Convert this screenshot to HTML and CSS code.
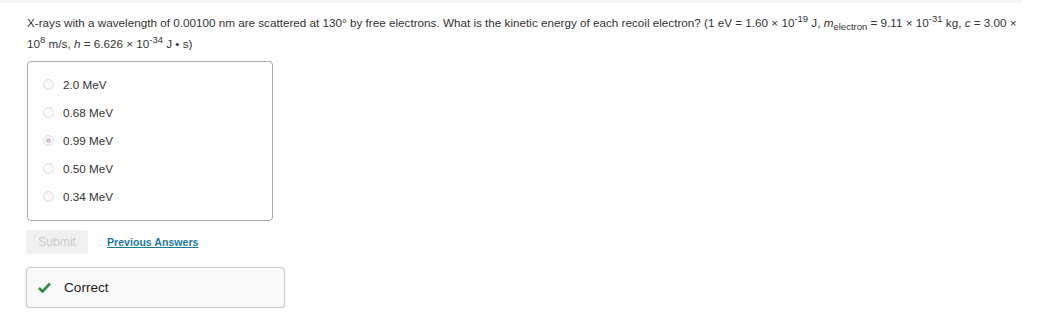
FILE: index.html
```html
<!DOCTYPE html>
<html>
<head>
<meta charset="utf-8">
<link rel="stylesheet" href="styles.css">
</head>
<body>
<div class="topbar"></div>
<div class="content">
  <p class="question">X-rays with a wavelength of 0.00100 nm are scattered at 130° by free electrons. What is the kinetic energy of each recoil electron? (1 eV = 1.60 × 10<sup>-19</sup> J, <i>m</i><sub>electron</sub> = 9.11 × 10<sup>-31</sup> kg, <i>c</i> = 3.00 × 10<sup>8</sup> m/s, <i>h</i> = 6.626 × 10<sup>-34</sup> J • s)</p>
  <div class="options">
    <label class="option"><span class="radio"></span><span>2.0 MeV</span></label>
    <label class="option"><span class="radio"></span><span>0.68 MeV</span></label>
    <label class="option"><span class="radio checked"></span><span>0.99 MeV</span></label>
    <label class="option"><span class="radio"></span><span>0.50 MeV</span></label>
    <label class="option"><span class="radio"></span><span>0.34 MeV</span></label>
  </div>
  <div class="actions">
    <button class="submit" disabled>Submit</button>
    <a class="prev" href="#">Previous Answers</a>
  </div>
  <div class="feedback">
    <svg class="check" width="13" height="11" viewBox="0 0 13 11"><path d="M1 6 L4.5 9.5 L12 1.5" fill="none" stroke="#2e8b3e" stroke-width="2.6"/></svg>
    <span>Correct</span>
  </div>
</div>
</body>
</html>
```
FILE: styles.css
```css
html, body { margin: 0; padding: 0; background: #fff; }
body { font-family: "Liberation Sans", Arial, sans-serif; color: #333; }
.topbar { height: 3px; width: 1022px; background: #f5f5f5; }
.content { padding: 9px 0 0 27px; }
.question { margin: 0; font-size: 11.7px; line-height: 21px; width: 1000px; color: #333; }
.question sup, .question sub { font-size: 9.5px; line-height: 1; }
.options {
  margin-top: 7px; width: 246px; box-sizing: border-box; border: 1px solid #aaa; border-radius: 4px;
  padding: 8px 0 10px 15px; display: flex; flex-direction: column;
}
.option { display: flex; align-items: center; gap: 9px; height: 28px; font-size: 11.7px; color: #333; }
.radio { width: 9px; height: 9px; border: 1px solid #ddd; border-radius: 50%; background: #fafafa; display: flex; align-items: center; justify-content: center; }
.radio.checked::after { content: ""; width: 5px; height: 5px; border-radius: 50%; background: #c9c9c9; }
.actions { display: flex; align-items: center; gap: 19px; margin-top: 9px; margin-left: -1px; }
.submit { width: 62px; height: 24px; border: none; border-radius: 2px; background: #f0f0f0; color: #ccc; font-family: "Liberation Sans", Arial, sans-serif; font-size: 12px; padding: 0; }
.prev { font-size: 10.6px; font-weight: bold; color: #1b7aa3; text-decoration: underline; }
.feedback {
  margin-top: 13px; margin-left: -1px; width: 259px; height: 41px; box-sizing: border-box;
  background: #f9f9f9; border: 1px solid #ccc; border-radius: 4px; box-shadow: 0 1px 2px rgba(0,0,0,0.2);
  display: flex; align-items: center; padding-left: 11px; gap: 13px; font-size: 13.6px; color: #222;
}
```
